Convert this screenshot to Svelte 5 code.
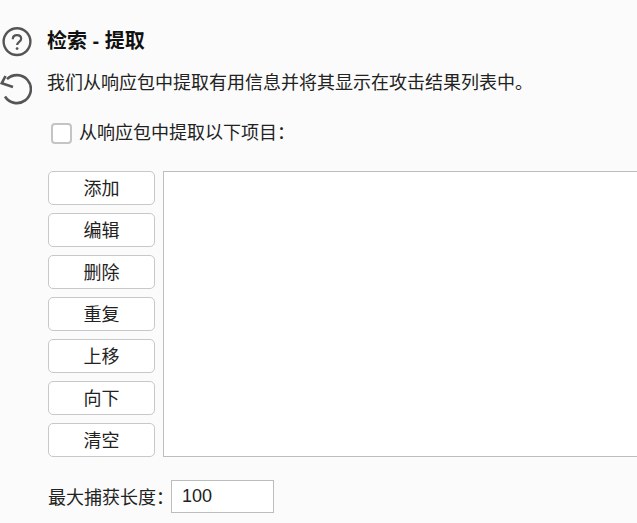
<script>
    const actions = ['添加', '编辑', '删除', '重复', '上移', '向下', '清空']
</script>

<div class="page">
    <div class="side">
        <svg class="help" width="30" height="30" viewBox="0 0 30 30" fill="none" stroke="#555" stroke-width="2.4">
            <circle cx="15" cy="14.6" r="13.4" />
            <path d="M10.8 12.2c0-2.5 1.9-4 4.3-4s4.1 1.5 4.1 3.6c0 3-4.1 3.2-4.1 6.2" stroke-width="2.2" />
            <circle cx="15.1" cy="21.6" r="1.4" fill="#555" stroke="none" />
        </svg>
        <svg class="undo" width="32" height="32" viewBox="0 0 32 32" fill="none" stroke="#555" stroke-width="2.6">
            <path d="M7 6.2A14 14 0 1 1 5 23.5" />
            <path d="M5.5 3L1.8 10.2L13 14" />
        </svg>
    </div>
    <div class="main">
        <h1>检索 - 提取</h1>
        <p class="desc">我们从响应包中提取有用信息并将其显示在攻击结果列表中。</p>
        <label class="check">
            <span class="box"></span>
            <span>从响应包中提取以下项目：</span>
        </label>
        <div class="editor">
            <div class="buttons">
                {#each actions as action}
                    <button type="button">{action}</button>
                {/each}
            </div>
            <div class="list"></div>
        </div>
        <div class="length">
            <span>最大捕获长度：</span>
            <div class="field">100</div>
        </div>
    </div>
</div>

<style>
    :global(body) {
        background: #fbfbfb;
        overflow: hidden;
    }
    .page {
        width: 637px;
        height: 523px;
        display: flex;
        overflow: hidden;
        font-family: "Liberation Sans", "Noto Sans CJK SC", sans-serif;
        font-size: 18px;
        color: #222;
    }
    .side {
        width: 47px;
        flex: none;
        display: flex;
        flex-direction: column;
        padding-top: 27px;
        box-sizing: border-box;
    }
    .help {
        margin-left: 2px;
    }
    .undo {
        margin-top: 16px;
    }
    .main {
        flex: 1;
        min-width: 0;
        padding-top: 29px;
    }
    h1 {
        margin: 0;
        font-size: 20px;
        font-weight: 700;
        line-height: 24px;
        color: #111;
    }
    .desc {
        margin: 18px 0 0;
        line-height: 24px;
        white-space: nowrap;
    }
    .check {
        display: flex;
        align-items: center;
        gap: 7px;
        margin: 26px 0 0 4px;
        line-height: 24px;
    }
    .box {
        width: 21px;
        height: 21px;
        box-sizing: border-box;
        border: 2px solid #c4c4c4;
        border-radius: 4px;
        background: #fff;
    }
    .editor {
        display: flex;
        gap: 8px;
        margin: 26px 0 0 1px;
    }
    .buttons {
        display: flex;
        flex-direction: column;
        gap: 8px;
    }
    button {
        width: 107px;
        height: 34px;
        padding: 0 0 2px;
        box-sizing: border-box;
        border: 1px solid #c8c8c8;
        border-radius: 5px;
        background: #fff;
        font: inherit;
        color: #222;
    }
    .list {
        flex: 1;
        margin-right: -4px;
        border: 1px solid #bdbdbd;
        background: #fff;
    }
    .length {
        display: flex;
        align-items: center;
        margin: 23px 0 0 1px;
    }
    .length span {
        width: 123px;
        margin-bottom: 2px;
        white-space: nowrap;
    }
    .field {
        width: 103px;
        height: 33px;
        box-sizing: border-box;
        padding-left: 10px;
        line-height: 31px;
        border: 1px solid #bdbdbd;
        background: #fff;
    }
</style>
